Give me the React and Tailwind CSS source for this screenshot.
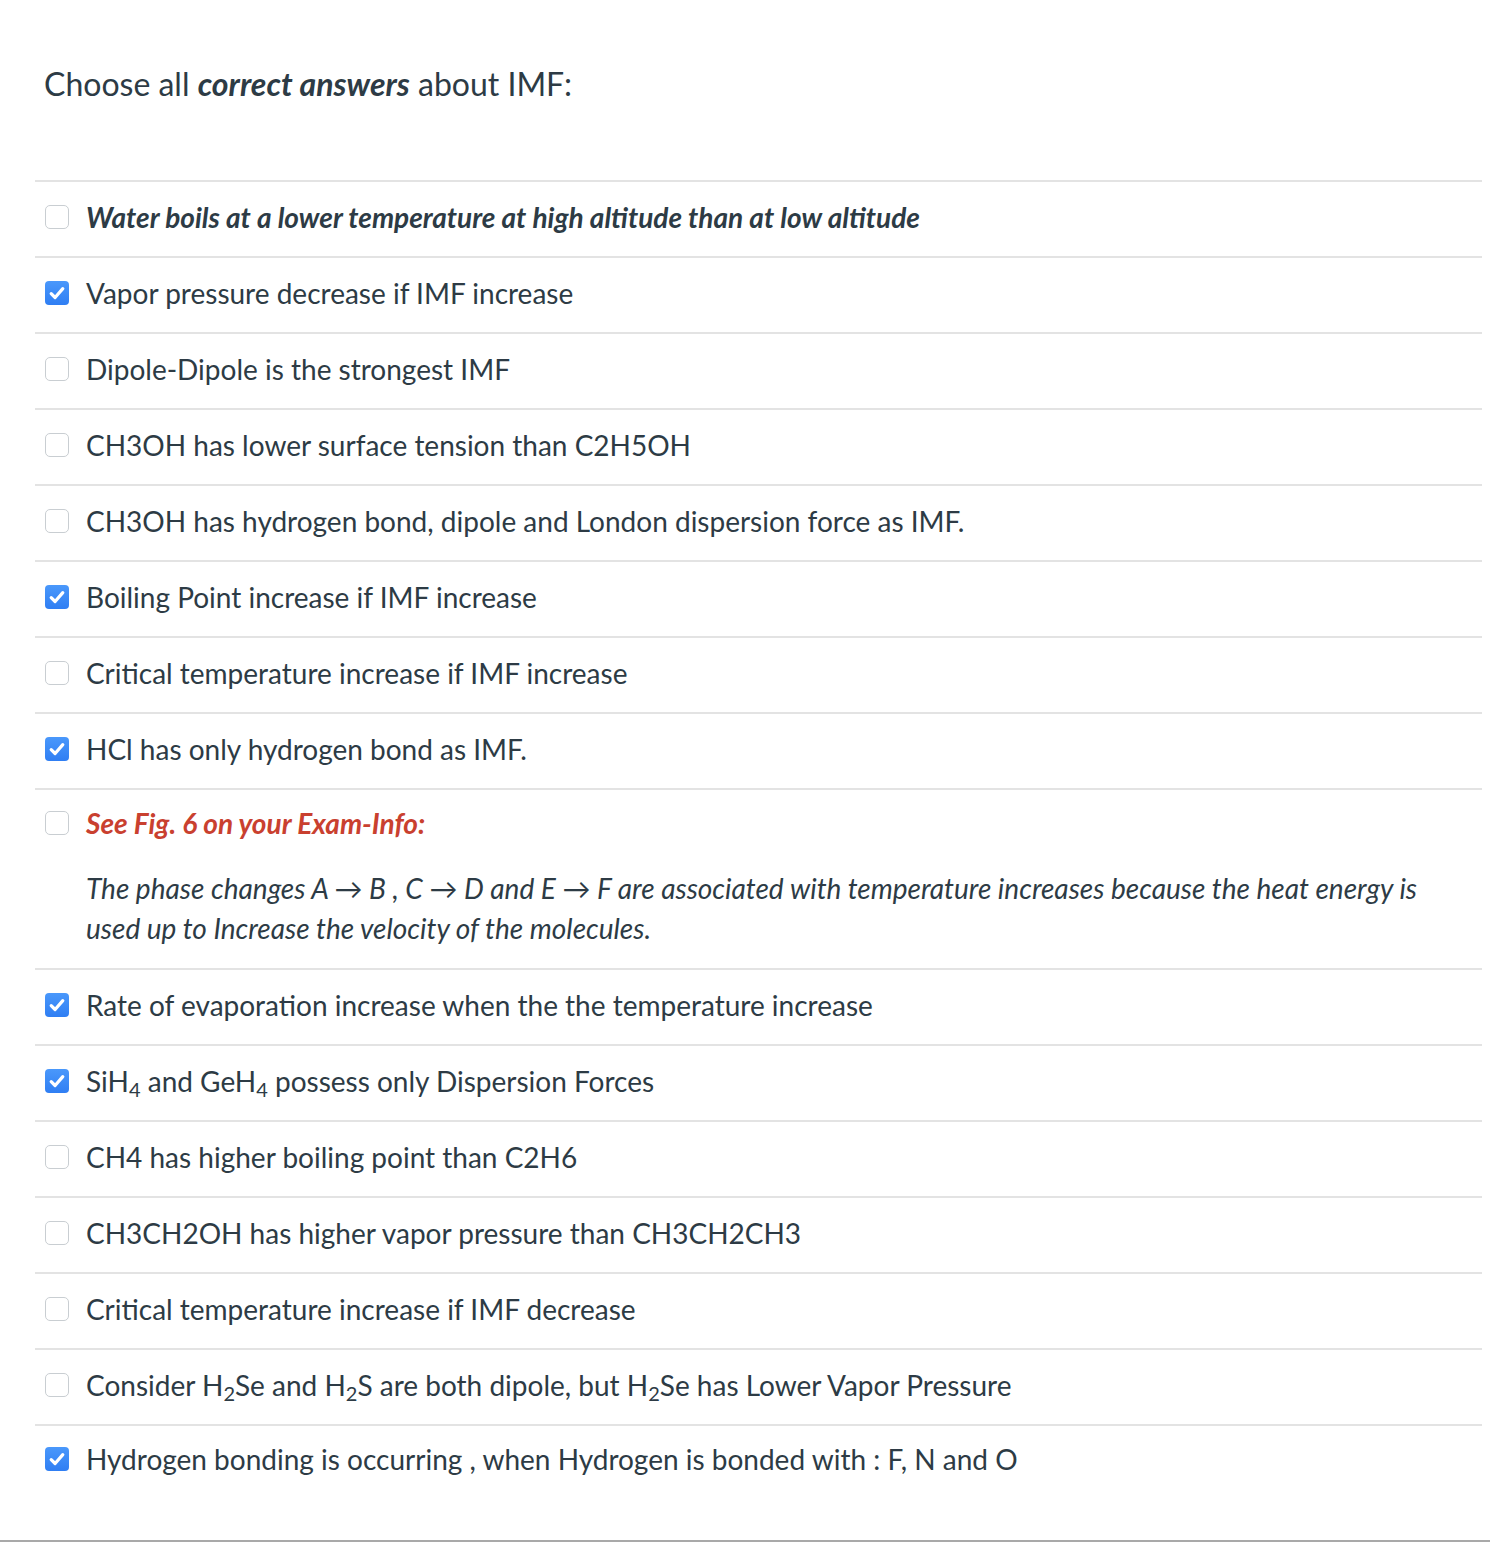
import React from "react";

const Box = ({ checked }) =>
  checked ? (
    <span className="flex h-[24px] w-[24px] shrink-0 items-center justify-center rounded-[4px] bg-gradient-to-b from-[#4a98fb] to-[#2f7ef3]">
      <svg width="20" height="20" viewBox="0 0 20 20" fill="none">
        <path d="M4.2 10.6l3.9 3.9L15.8 5.6" stroke="white" strokeWidth="3.2" strokeLinecap="round" strokeLinejoin="round" />
      </svg>
    </span>
  ) : (
    <span className="block h-[24px] w-[24px] shrink-0 rounded-[5px] border border-[#c9ced2] bg-white" />
  );

const Row = ({ checked, children, last }) => (
  <div className={`flex items-center border-t-2 border-[#e3e3e3] pb-[5px] pl-[10px] ${last ? "h-[72px]" : "h-[76px]"}`}>
    <Box checked={checked} />
    <div className="ml-[17px]">{children}</div>
  </div>
);

const H = ({ n }) => <sub className="text-[20px]">{n}</sub>;

export default function App() {
  return (
    <div className="bg-white text-[#2d3b45] font-['Lato','Liberation_Sans',sans-serif]">
      <div className="pl-[35px] pr-[8px]">
        <h1 className="pl-[9px] pt-[64px] text-[32px] leading-[40px]">
          Choose all <strong className="font-bold italic">correct answers</strong> about IMF:
        </h1>
        <div className="mt-[76px] text-[28px]">
          <Row>
            <span className="font-bold italic">Water boils at a lower temperature at high altitude than at low altitude</span>
          </Row>
          <Row checked>Vapor pressure decrease if IMF increase</Row>
          <Row>Dipole-Dipole is the strongest IMF</Row>
          <Row>CH3OH has lower surface tension than C2H5OH</Row>
          <Row>CH3OH has hydrogen bond, dipole and London dispersion force as IMF.</Row>
          <Row checked>Boiling Point increase if IMF increase</Row>
          <Row>Critical temperature increase if IMF increase</Row>
          <Row checked>HCl has only hydrogen bond as IMF.</Row>
          <div className="border-t-2 border-[#e3e3e3] pl-[10px] pb-[20px]">
            <div className="flex h-[70px] items-center pb-[5px]">
              <Box />
              <span className="ml-[17px] font-bold italic text-[#c9402f]">See Fig. 6 on your Exam-Info:</span>
            </div>
            <p className="ml-[41px] mt-[8px] pr-[40px] italic leading-[40px]">
              The phase changes A → B , C → D and E → F are associated with temperature increases because the heat energy is used up to Increase the velocity of the molecules.
            </p>
          </div>
          <Row checked>Rate of evaporation increase when the the temperature increase</Row>
          <Row checked>
            SiH<H n="4" /> and GeH<H n="4" /> possess only Dispersion Forces
          </Row>
          <Row>CH4 has higher boiling point than C2H6</Row>
          <Row>CH3CH2OH has higher vapor pressure than CH3CH2CH3</Row>
          <Row>Critical temperature increase if IMF decrease</Row>
          <Row>
            Consider H<H n="2" />Se and H<H n="2" />S are both dipole, but H<H n="2" />Se has Lower Vapor Pressure
          </Row>
          <Row checked last>Hydrogen bonding is occurring , when Hydrogen is bonded with : F, N and O</Row>
        </div>
      </div>
      <div className="mt-[44px] h-[2px] bg-[#a9a9a9]" />
      <div className="h-[18px]" />
    </div>
  );
}
